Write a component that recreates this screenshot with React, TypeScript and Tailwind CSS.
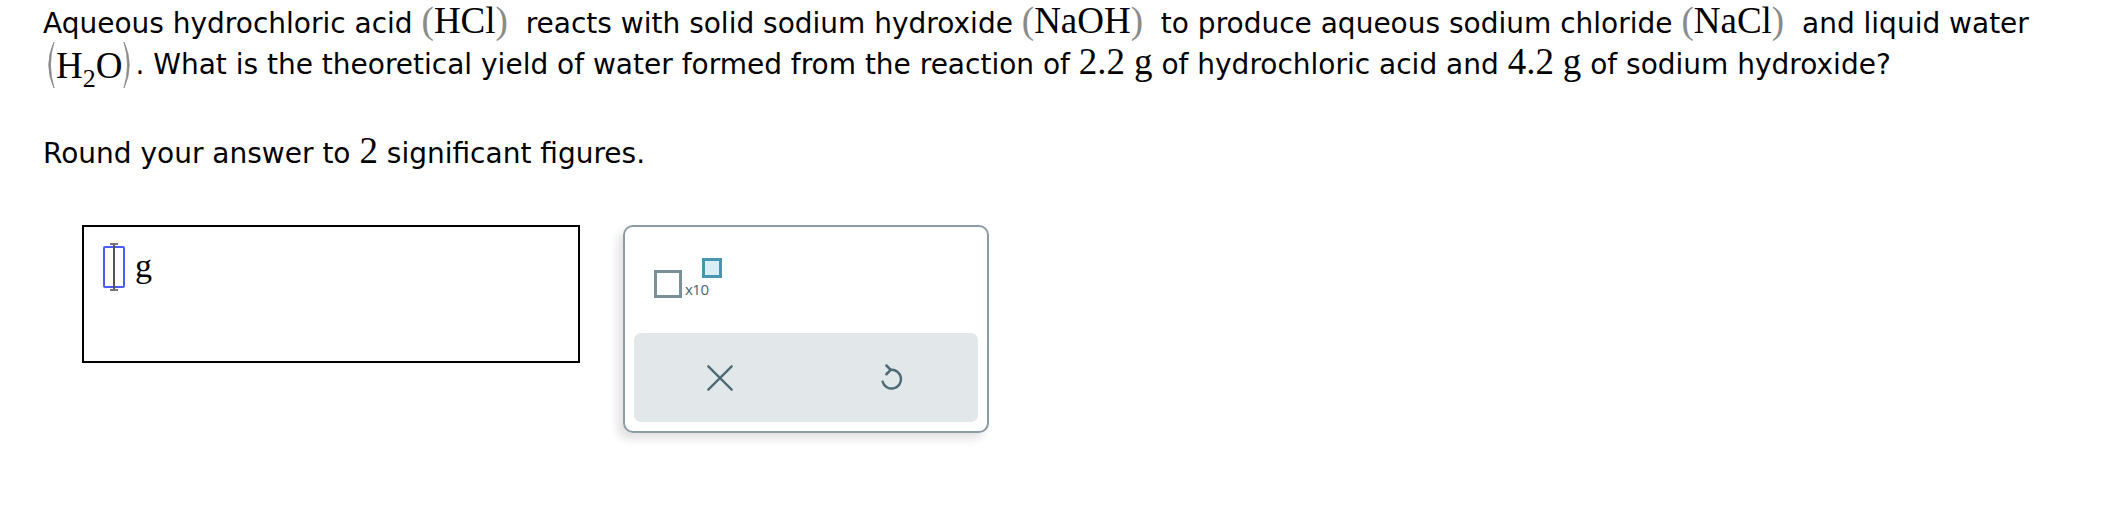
import React from "react";

function M({ children }: { children: React.ReactNode }) {
  return (
    <span className="font-['Liberation_Serif','Times_New_Roman',serif] text-[37px] leading-[41px] text-black">
      {children}
    </span>
  );
}

function P({ children }: { children: React.ReactNode }) {
  return <span className="text-[#8a8a8a] font-['Liberation_Serif',serif] text-[37px] leading-[41px]">{children}</span>;
}

function TallParen({ right }: { right?: boolean }) {
  return (
    <svg width="13" height="48" viewBox="0 0 13 48" className={right ? "-scale-x-100" : ""}>
      <path d="M11 1 Q0.5 24 11 47 Q4 24 11 1 Z" fill="#8a8a8a" stroke="#8a8a8a" strokeWidth="0.8" />
    </svg>
  );
}

function UndoIcon() {
  return (
    <svg width="30" height="30" viewBox="0 0 24 24" fill="none" stroke="#4d6a75" strokeWidth="2" strokeLinecap="round" strokeLinejoin="round">
      <path d="M11 5.5 A 7.5 7.5 0 1 1 4.5 15" />
      <path d="M7.5 2 L11 5.5 L7.5 9" />
    </svg>
  );
}

function XIcon() {
  return (
    <svg width="28" height="28" viewBox="0 0 24 24" fill="none" stroke="#4d6a75" strokeWidth="2" strokeLinecap="round">
      <path d="M2 2 L22 22 M22 2 L2 22" />
    </svg>
  );
}

export default function App() {
  return (
    <div className="w-[2106px] h-[516px] bg-white text-black font-['DejaVu_Sans',Verdana,sans-serif] text-[28px] pl-[43px] pt-[0px] overflow-hidden">
      <div className="whitespace-nowrap leading-[34px]">
        Aqueous hydrochloric acid <P>(</P><M>HCl</M><P>)</P>&nbsp; reacts with solid sodium hydroxide <P>(</P><M>NaOH</M><P>)</P>&nbsp; to produce aqueous sodium chloride <P>(</P><M>NaCl</M><P>)</P>&nbsp; and liquid water
      </div>
      <div className="-mt-[4px] whitespace-nowrap leading-[56px] flex items-center">
        <TallParen />
        <M>
          H<sub className="text-[26px] relative top-[9px] align-baseline">2</sub>O
        </M>
        <TallParen right />
        <span>. What is the theoretical yield of water formed from the reaction of <M>2.2</M> <M>g</M> of hydrochloric acid and <M>4.2</M> <M>g</M> of sodium hydroxide?</span>
      </div>
      <div className="mt-[37px] whitespace-nowrap leading-[34px]">
        Round your answer to <M>2</M> significant figures.
      </div>
      <div className="mt-[54px] flex items-start">
        <div className="ml-[39px] w-[498px] h-[138px] border-2 border-black flex items-start pt-[19px] pl-[19px]">
          <div className="relative w-[22px] h-[42px] border-2 border-[#4a5cf5] rounded-[2px] flex justify-center">
            <div className="absolute top-[-4px] bottom-[-4px] w-[2px] bg-[#555]" />
            <div className="absolute top-[-5px] w-[8px] h-[2px] bg-[#777]" />
            <div className="absolute bottom-[-5px] w-[8px] h-[2px] bg-[#777]" />
          </div>
          <span className="ml-[10px] mt-[8px] font-['Liberation_Serif',serif] text-[34px] leading-[24px]">g</span>
        </div>
        <div className="ml-[43px] w-[366px] h-[208px] border-2 border-[#8a9ca5] rounded-[10px] shadow-[-5px_6px_10px_rgba(0,0,0,0.12)] flex flex-col px-[9px] pb-[9px]">
          <div className="h-[106px] relative">
            <div className="absolute left-[20px] top-[43px] w-[28px] h-[28px] border-[3px] border-[#7a8f98]" />
            <div className="absolute left-[68px] top-[31px] w-[20px] h-[20px] border-[3px] border-[#4596b0] bg-[#d6eef4]" />
            <span className="absolute left-[51px] top-[51px] text-[15px] text-[#4b6570] font-['Open_Sans',sans-serif] tracking-[-0.5px]">x10</span>
          </div>
          <div className="flex-1 bg-[#e2e7ea] rounded-[7px] flex items-center">
            <div className="w-[172px] flex justify-center">
              <XIcon />
            </div>
            <div className="w-[172px] flex justify-center">
              <UndoIcon />
            </div>
          </div>
        </div>
      </div>
    </div>
  );
}
